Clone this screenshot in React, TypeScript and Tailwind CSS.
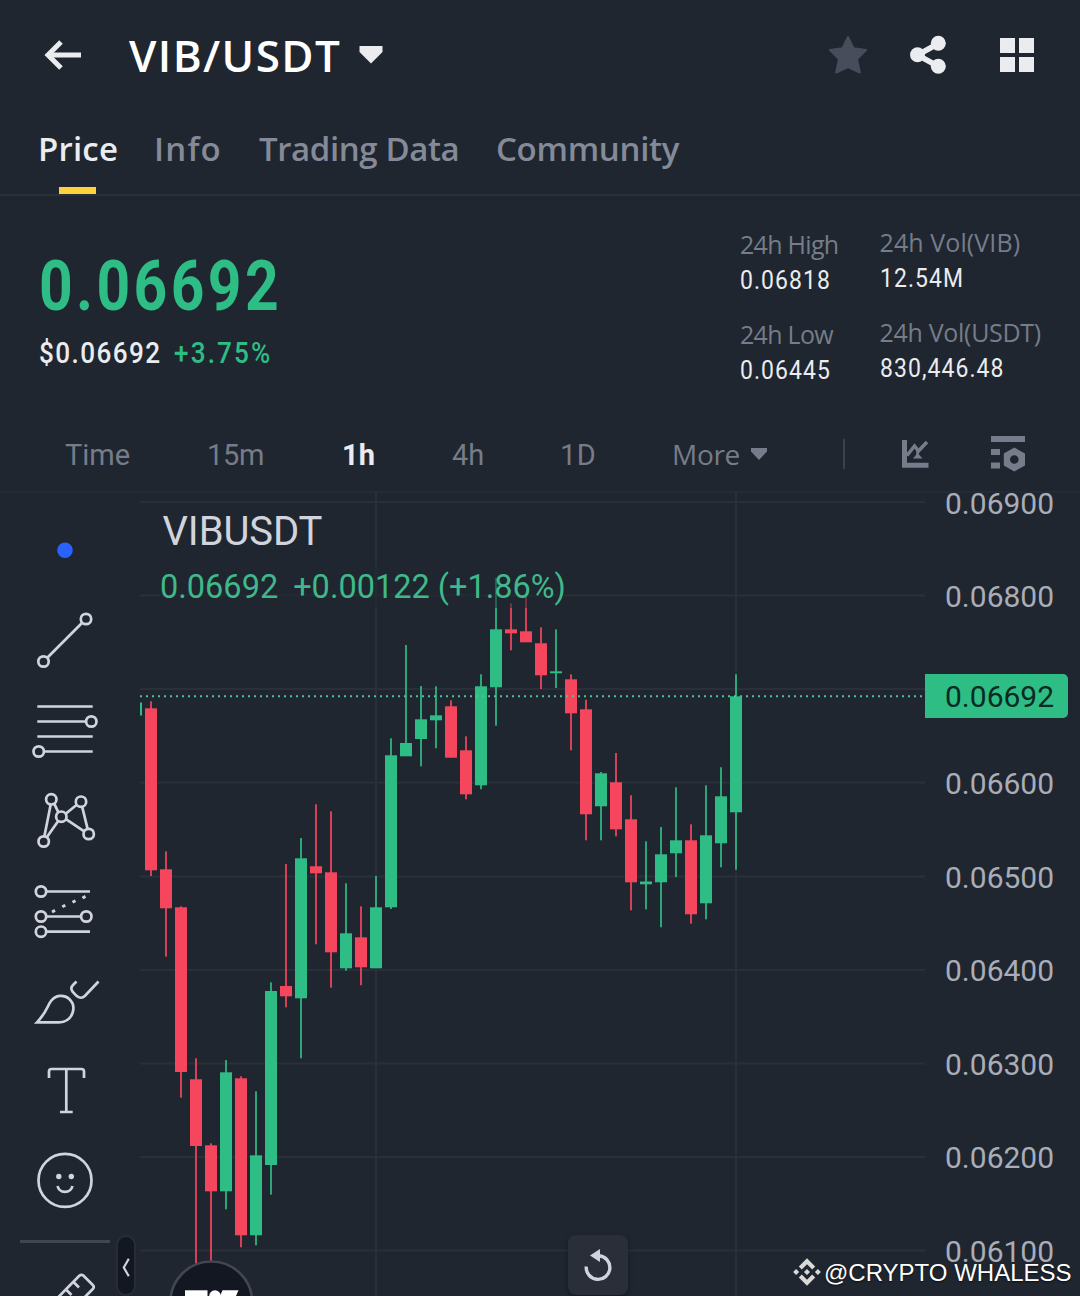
import type { ReactNode } from 'react';

interface Candle {
  x: number;
  high: number;
  low: number;
  top: number;
  bottom: number;
  up: boolean;
}

const UP = '#2ebd85';
const DOWN = '#f6465d';
const CANDLE_STEP = 15;
const CANDLE_WIDTH = 12;

// [wick top, wick bottom, body top, body bottom, up?] in chart units
const RAW_CANDLES: [number, number, number, number, 0 | 1][] = [
  [701.3, 876, 708.3, 870.3, 0],
  [851.3, 956.7, 869.3, 908.3, 0],
  [906.3, 1097.7, 907.3, 1072, 0],
  [1058.3, 1264, 1079.3, 1146, 0],
  [1143.3, 1262, 1145.3, 1191.3, 0],
  [1060, 1209.3, 1072.3, 1191.3, 1],
  [1076.3, 1247.3, 1078.3, 1235.3, 0],
  [1091.3, 1245.3, 1155.3, 1235.3, 1],
  [982.3, 1194.7, 991, 1165, 1],
  [864, 1007.3, 986, 996.3, 0],
  [838, 1058.3, 858.3, 998.3, 1],
  [804.3, 944.3, 866.3, 873.3, 0],
  [811.3, 987.7, 872.3, 952.3, 0],
  [883.3, 970.7, 933.3, 968.3, 1],
  [906.3, 985.3, 937.3, 967.3, 0],
  [876, 968, 907.3, 968.3, 1],
  [738.3, 909, 755.3, 907.3, 1],
  [645, 756, 743, 756.3, 1],
  [686, 766.3, 719.3, 739, 1],
  [686.3, 748.3, 715.3, 720.3, 1],
  [700.3, 757.7, 706.3, 757.7, 0],
  [736.3, 799.3, 750.3, 794.3, 0],
  [674.3, 789.3, 686.3, 785.3, 1],
  [578, 725.7, 629.3, 687.3, 1],
  [603.3, 650.3, 629.3, 633.3, 0],
  [597, 642, 631.3, 642.3, 0],
  [627.3, 689, 643.3, 675.3, 0],
  [629.3, 688, 671.3, 673.3, 1],
  [674.3, 750.3, 679.3, 713.3, 0],
  [699.7, 840.3, 709.3, 814.3, 0],
  [772, 840.3, 773.3, 806.3, 1],
  [753, 836.3, 782.3, 829.3, 0],
  [795.3, 910.3, 819.3, 882.3, 0],
  [841.3, 909.3, 881.5, 884.3, 1],
  [827, 927.3, 854.3, 882.3, 1],
  [787.3, 877, 840.3, 853.3, 1],
  [824.3, 923.7, 840.3, 914.3, 0],
  [785.3, 919.3, 835.3, 903.3, 1],
  [767.3, 867.3, 796.3, 843.3, 1],
  [674.3, 869.7, 696.3, 812.3, 1],
];

const CANDLES: Candle[] = RAW_CANDLES.map(([high, low, top, bottom, up], i) => ({
  x: 151 + i * CANDLE_STEP,
  high,
  low,
  top,
  bottom,
  up: up === 1,
}));

const GRID_ROWS = [502, 595.5, 689, 782.5, 876.5, 970, 1063.5, 1157, 1250.5];
const GRID_COLS = [376, 736];

// the third row is covered by the last price tag
const AXIS_LABELS = [
  '0.06900',
  '0.06800',
  '',
  '0.06600',
  '0.06500',
  '0.06400',
  '0.06300',
  '0.06200',
  '0.06100',
];

function Header() {
  return (
    <header className="flex h-[110px] items-center pl-[44px] pr-[46px]">
      <svg width="38" height="32" viewBox="0 0 38 32" fill="none" stroke="#eaecef" strokeWidth="5">
        <path d="M4 16H37" />
        <path d="M17 3L4 16L17 29" />
      </svg>
      <h1 className="ml-[47px] font-['Open_Sans',sans-serif] text-[44px] leading-[60px] font-semibold tracking-[1.4px] whitespace-nowrap text-white">
        VIB/USDT
      </h1>
      <svg className="ml-[18px]" width="24" height="18" viewBox="0 0 24 18" fill="#eaecef">
        <path d="M0.5 0H23.5V6L12 17.5L0.5 6Z" />
      </svg>

      <div className="ml-auto flex items-center">
        <svg width="38" height="40" viewBox="0 0 38 40" fill="#474d5a" stroke="#474d5a" strokeWidth="2" strokeLinejoin="round">
          <path d="M19 2L24.4 13.2L37 15L28 24L30.8 37.5L19 32L7.2 37.5L10 24L1 15L13.6 13.2Z" />
        </svg>
        <svg className="ml-[43.5px]" width="36" height="40" viewBox="0 0 36 40" fill="#eaecef">
          <path d="M28.5 8.5L7.5 20L28.5 31.5" fill="none" stroke="#eaecef" strokeWidth="5.5" />
          <circle cx="28.3" cy="8.2" r="7.5" />
          <circle cx="7.5" cy="19.8" r="7.5" />
          <circle cx="28.3" cy="31.3" r="7.5" />
        </svg>
        <div className="ml-[54px] grid grid-cols-2 gap-1">
          <span className="size-[15px] bg-[#eaecef]" />
          <span className="size-[15px] bg-[#eaecef]" />
          <span className="size-[15px] bg-[#eaecef]" />
          <span className="size-[15px] bg-[#eaecef]" />
        </div>
      </div>
    </header>
  );
}

function Tabs() {
  return (
    <nav className="flex h-[86px] border-b-2 border-[#2a303a] pt-[19px] pl-[38px] font-['Open_Sans',sans-serif] text-[33px] leading-[40px] font-semibold whitespace-nowrap text-[#848a98]">
      <div className="flex w-[116px] flex-col">
        <span className="tracking-[0.2px] text-[#eaecef]">Price</span>
        <span className="mt-[18px] ml-[21px] h-[7px] w-[37px] bg-[#fcd13b]" />
      </div>
      <span className="w-[105px] tracking-[1.2px]">Info</span>
      <span className="w-[237px] tracking-[-0.4px]">Trading Data</span>
      <span className="tracking-[-0.3px]">Community</span>
    </nav>
  );
}

function Stat({ label, value, labelClass }: { label: string; value: string; labelClass: string }) {
  return (
    <div className="leading-[34px] whitespace-nowrap">
      <div className={`font-['Open_Sans',sans-serif] text-[25px] text-[#767c89] ${labelClass}`}>{label}</div>
      <div className="mt-0.5 h-[33px] origin-left scale-x-90 text-[25.5px] tracking-[1.2px] text-[#eaecef]">{value}</div>
    </div>
  );
}

function PriceSummary() {
  return (
    <section className="flex h-[221px] pl-[39px]">
      <div className="w-[701px] pt-[55px] whitespace-nowrap">
        <div className="origin-left scale-x-[0.84] text-[70px] leading-[70px] font-bold tracking-[4px] text-[#2ebd85]">
          0.06692
        </div>
        <div className="mt-[14px] flex text-[29px] leading-9 font-medium">
          <span className="w-[135px] origin-left scale-x-90 tracking-[1.6px] text-[#eaecef]">$0.06692</span>
          <span className="origin-left scale-x-90 tracking-[2.4px] text-[#2ebd85]">+3.75%</span>
        </div>
      </div>
      <div className="flex w-[139.5px] flex-col gap-[21px] pt-[31px]">
        <Stat label="24h High" value="0.06818" labelClass="tracking-[-0.7px]" />
        <Stat label="24h Low" value="0.06445" labelClass="tracking-[-0.7px]" />
      </div>
      <div className="flex flex-col gap-[21px] pt-[29px]">
        <Stat label="24h Vol(VIB)" value="12.54M" labelClass="tracking-[0.1px]" />
        <Stat label="24h Vol(USDT)" value="830,446.48" labelClass="tracking-[-0.3px]" />
      </div>
    </section>
  );
}

function IntervalBar() {
  return (
    <div className="flex h-[76px] items-center border-b-2 border-[#252b36] pl-[65px] text-[29px] whitespace-nowrap text-[#767c89]">
      <span className="mt-1 w-[142px]">Time</span>
      <span className="mt-1 w-[135px] tracking-[-0.3px]">15m</span>
      <span className="mt-1 w-[110px] font-bold text-[#eaecef]">1h</span>
      <span className="mt-1 w-[108px]">4h</span>
      <span className="mt-1 w-[111px] tracking-[0.5px]">1D</span>
      <span className="w-[80px] pl-px font-['Open_Sans',sans-serif] text-[28px] tracking-[-0.3px]">More</span>
      <svg width="16" height="12" viewBox="0 0 16 12" fill="#767c89">
        <path d="M0 0H16V3.5L8 12L0 3.5Z" />
      </svg>
      <span className="ml-[76px] h-[30px] w-0.5 bg-[#3a404c]" />
      <svg className="ml-[57px]" width="27" height="28" viewBox="0 0 27 28" fill="none" stroke="#767c89">
        <path d="M2.5 0V25.2H26.5" strokeWidth="5" />
        <path d="M5 15.5L12.5 6L16.5 11L25 2" strokeWidth="3.5" />
        <path d="M15.5 11V16" strokeWidth="2.5" />
        <path d="M15.7 13L20.5 18.5H11Z" fill="#767c89" stroke="none" />
      </svg>
      <svg className="ml-[62px]" width="35" height="36" viewBox="0 0 35 36" fill="#767c89">
        <path d="M0 0H34V6H0ZM0 13H9V19H0ZM0 26.5H9V32.5H0Z" />
        <path
          fillRule="evenodd"
          d="M23.3 11.5L34 17.5V29.5L23.3 35.5L12.8 29.5V17.5ZM23.3 19.2A4.3 4.3 0 1 0 23.3 27.8A4.3 4.3 0 1 0 23.3 19.2Z"
        />
      </svg>
    </div>
  );
}

function Tool({ children }: { children: ReactNode }) {
  return (
    <svg
      className="shrink-0"
      width="140"
      height="90"
      viewBox="0 0 140 90"
      fill="none"
      stroke="#d1d4dc"
      strokeWidth="2.7"
    >
      {children}
    </svg>
  );
}

function DrawingToolbar() {
  return (
    <aside className="flex w-[140px] shrink-0 flex-col pt-3">
      <Tool>
        <circle cx="65" cy="45.3" r="7.8" fill="#2962ff" stroke="none" />
      </Tool>
      {/* trend line */}
      <Tool>
        <circle cx="43.5" cy="66.5" r="5.2" />
        <circle cx="86" cy="24" r="5.2" />
        <path d="M47.3 62.7L82.2 27.8" />
      </Tool>
      {/* fib retracement */}
      <Tool>
        <path d="M37.3 21.5H92.7M37.3 36.5H86M37.3 51.5H92.7M44 66.5H92.7" />
        <circle cx="91.3" cy="36.5" r="5.2" />
        <circle cx="38.7" cy="66.5" r="5.2" />
      </Tool>
      {/* pattern */}
      <Tool>
        <circle cx="51.3" cy="24.3" r="5.2" />
        <circle cx="81" cy="26.7" r="5.2" />
        <circle cx="61.3" cy="41.7" r="5.2" />
        <circle cx="43.7" cy="66.5" r="5.2" />
        <circle cx="88.7" cy="59" r="5.2" />
        <path d="M50.7 29.5L44.4 61.3M54.2 28.6L58.4 37.4M65.7 38.8L76.8 29.8M82.2 31.9L87.6 53.9M65.9 44.2L84.2 56.3M58.2 45.9L46.8 62.3" />
      </Tool>
      {/* forecast */}
      <Tool>
        <circle cx="41" cy="26.5" r="5.2" />
        <circle cx="41" cy="51.5" r="5.2" />
        <circle cx="86.3" cy="51.5" r="5.2" />
        <circle cx="41" cy="66.7" r="5.2" />
        <path d="M46.5 26.5H90M46.5 51.5H81M46.5 66.7H90" />
        <path d="M52 47L55 45.4M62.3 41.8L65.3 40.2M72.5 37.3L75.5 35.7M82.5 33L85.5 31.4" strokeWidth="3" />
      </Tool>
      {/* brush */}
      <Tool>
        <path d="M37 67.3C48 55.5 47 51 51 46C55.5 40 64 39.3 69 43.8C73 47.5 74.3 53 72.5 58C70.5 64 65 67.3 59 67.3Z" />
        <path d="M76.5 26.5L73 30C71 32 71 34.5 72.6 36.6L76.5 40.8C79 43.2 82.5 43.2 84.8 41L98.5 26.5" />
      </Tool>
      {/* text */}
      <Tool>
        <path d="M49 33V26.5Q49 24 51.5 24H81.5Q84 24 84 26.5V33M66.3 24V67M60 67H72.7" />
      </Tool>
      {/* emoji */}
      <Tool>
        <circle cx="65" cy="45.4" r="26.5" />
        <circle cx="58.8" cy="41.5" r="2.7" fill="#d1d4dc" stroke="none" />
        <circle cx="71.3" cy="41.5" r="2.7" fill="#d1d4dc" stroke="none" />
        <path d="M57.5 51C59.5 58.8 70.5 58.8 72.5 51" />
      </Tool>
      <div className="mt-[15px] ml-5 h-[3px] w-[90px] shrink-0 bg-[#434651]" />
      {/* ruler */}
      <svg className="shrink-0" width="112" height="53" viewBox="0 0 112 53" fill="none" stroke="#d1d4dc" strokeWidth="2.7">
        <path d="M54 58.5L79.5 32.6Q81.5 31 83.3 32.6L92.8 42Q94.8 44 92.8 46L74 65" />
        <path d="M73.5 39L79 44.5M66 46.5L71.5 52" />
      </svg>
    </aside>
  );
}

function CandleChart() {
  return (
    <svg className="shrink-0" width="785" height="803" viewBox="140 493 785 803" shapeRendering="geometricPrecision">
      <g stroke="#2a3039" strokeWidth="2">
        {GRID_ROWS.map((y) => (
          <path key={y} d={`M140 ${y}H925`} />
        ))}
        {GRID_COLS.map((x) => (
          <path key={x} d={`M${x} 493V1296`} />
        ))}
      </g>
      <rect x="140" y="702.5" width="2" height="13" fill={UP} />
      {CANDLES.map((c) => (
        <g key={c.x} fill={c.up ? UP : DOWN}>
          <rect x={c.x - 1} y={c.high} width="2" height={c.low - c.high} opacity="0.85" />
          <rect x={c.x - CANDLE_WIDTH / 2} y={c.top} width={CANDLE_WIDTH} height={c.bottom - c.top} />
        </g>
      ))}
      <path d="M140 696.3H925" stroke="#4fc298" strokeWidth="2" strokeDasharray="2 4" />
    </svg>
  );
}

function PriceAxis() {
  return (
    <div className="relative w-[155px]">
      <div className="-mt-[36.5px] pl-5 text-[30px] text-[#a9adb8]">
        {AXIS_LABELS.map((label, i) => (
          <div key={i} className="h-[93.5px] leading-[93.5px]">
            {label}
          </div>
        ))}
      </div>
      <div className="absolute top-[181px] left-0 h-11 w-[143px] rounded-r-[5px] bg-[#2ebd85] pl-5 text-[30px] leading-[46px] text-[#0b2a22]">
        0.06692
      </div>
    </div>
  );
}

function ChartLegend() {
  return (
    <div className="absolute top-[15px] left-[160px] whitespace-nowrap">
      <div className="pl-[2.5px] text-[40px] leading-[48px] tracking-[-0.1px] text-[#d1d4dc]">VIBUSDT</div>
      <div className="mt-[10px] flex gap-[15px] bg-[#1f262f]/55 text-[32.5px] leading-[42px] text-[#3fb98a]">
        <span>0.06692</span>
        <span>+0.00122 (+1.86%)</span>
      </div>
    </div>
  );
}

function ChartOverlays() {
  return (
    <>
      {/* collapse toolbar handle */}
      <div className="absolute top-[742px] left-[116px] flex h-[61px] w-5 justify-center rounded-[10px] border-2 border-[#272c37] bg-[#131722] pt-[21px]">
        <svg width="8" height="19" viewBox="0 0 8 19" fill="none" stroke="#d1d4dc" strokeWidth="2.2">
          <path d="M6.8 0.8L1.8 9.5L6.8 18.2" />
        </svg>
      </div>

      {/* chart vendor badge */}
      <svg className="absolute top-[766px] left-[168px]" width="87" height="37" viewBox="0 0 87 37">
        <circle cx="43.3" cy="43.5" r="41" fill="#131722" stroke="#434651" strokeWidth="2.6" />
        <g fill="#fff">
          <path d="M17 31.3H39.5V37H17Z" />
          <circle cx="47" cy="37" r="5.8" />
          <path d="M54.5 31.3H70.5L68 37H52Z" />
        </g>
      </svg>

      <button className="absolute top-[742px] left-[568px] flex h-[60px] w-[60px] items-center justify-center rounded-lg bg-[#2a2e39] shadow-[0_2px_5px_rgba(0,0,0,0.35)]">
        <svg className="mb-px" width="30" height="34" viewBox="0 0 30 34" fill="none">
          <path d="M3.3 18.5A11.8 11.8 0 1 0 16 7.8" stroke="#d1d4dc" strokeWidth="3.4" />
          <path d="M17 1V14L7 7.5Z" fill="#d1d4dc" />
        </svg>
      </button>

      <div className="absolute top-[765px] left-[793px] flex items-center font-['Liberation_Sans',sans-serif] text-[24px] leading-[30px] whitespace-nowrap text-white [text-shadow:0_1px_2px_rgba(0,0,0,0.6)]">
        <svg className="mb-0.5" width="28" height="28" viewBox="0 0 28 28" fill="#d9d9d9">
          <path d="M14 0.3L22.2 8.4L19.2 11.4L14 6.2L8.8 11.4L5.8 8.4Z" />
          <path d="M14 27.7L22.2 19.6L19.2 16.6L14 21.8L8.8 16.6L5.8 19.6Z" />
          <path d="M14 11L17 14L14 17L11 14ZM3.1 11L6.1 14L3.1 17L0.1 14ZM24.9 11L27.9 14L24.9 17L21.9 14Z" />
        </svg>
        <span className="ml-[3px]">@CRYPTO WHALESS</span>
      </div>
    </>
  );
}

export default function App() {
  return (
    <div className="flex h-[1296px] w-[1080px] flex-col overflow-hidden bg-[#1f262f] font-['Roboto',sans-serif]">
      <Header />
      <Tabs />
      <PriceSummary />
      <IntervalBar />
      <main className="relative flex h-[803px]">
        <DrawingToolbar />
        <CandleChart />
        <PriceAxis />
        <ChartLegend />
        <ChartOverlays />
      </main>
    </div>
  );
}
